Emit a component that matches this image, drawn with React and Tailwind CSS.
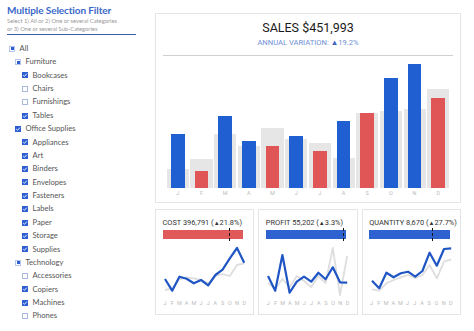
import React from "react";

const items = [
  ["All", 0, "partial"],
  ["Furniture", 1, "partial"],
  ["Bookcases", 2, "on"],
  ["Chairs", 2, "off"],
  ["Furnishings", 2, "off"],
  ["Tables", 2, "on"],
  ["Office Supplies", 1, "on"],
  ["Appliances", 2, "on"],
  ["Art", 2, "on"],
  ["Binders", 2, "on"],
  ["Envelopes", 2, "on"],
  ["Fasteners", 2, "on"],
  ["Labels", 2, "on"],
  ["Paper", 2, "on"],
  ["Storage", 2, "on"],
  ["Supplies", 2, "on"],
  ["Technology", 1, "partial"],
  ["Accessories", 2, "off"],
  ["Copiers", 2, "on"],
  ["Machines", 2, "on"],
  ["Phones", 2, "off"],
];

const indent = ["pl-[9px]", "pl-[15px]", "pl-[22px]"];

function Check({ state }) {
  if (state === "on")
    return (
      <span className="w-[6px] h-[6px] bg-[#2d5fd2] flex items-center justify-center shrink-0">
        <svg viewBox="0 0 6 6" width="6" height="6">
          <path d="M1.2 3.1 L2.5 4.3 L4.9 1.6" stroke="white" strokeWidth="0.9" fill="none" />
        </svg>
      </span>
    );
  if (state === "partial")
    return (
      <span className="w-[6px] h-[6px] border border-[#b7c7ee] bg-white flex items-center justify-center shrink-0">
        <span className="w-[3px] h-[3px] bg-[#2d5fd2]" />
      </span>
    );
  return <span className="w-[6px] h-[6px] border border-[#a9b8de] bg-white shrink-0" />;
}

const months = ["J", "F", "M", "A", "M", "J", "J", "A", "S", "O", "N", "D"];
const grey = [19, 29, 54, 42, 60, 49, 45, 30, 75, 77, 79, 99];
const col = [54, 17, 72, 47, 42, 52, 37, 67, 75, 110, 124, 90];
const isBlue = [1, 0, 1, 1, 0, 1, 0, 1, 0, 1, 1, 0];

const sparks = [
  {
    label: "COST 396,791",
    pct: "21.8%",
    bar: "bg-[#e05a5a]",
    marker: 66,
    blue: [279, 290.7, 276.7, 278.7, 283.3, 280, 285.3, 275, 269.7, 258.3, 248, 262.7],
    grey: [290, 288.3, 279.3, 277.3, 278.3, 280, 283.3, 276, 274, 276, 265, 263.3],
  },
  {
    label: "PROFIT 55,202",
    pct: "3.3%",
    bar: "bg-[#2d62d0]",
    marker: 77.5,
    blue: [276, 290.7, 255, 292.7, 281.7, 276.7, 281.7, 272.7, 279.3, 267.3, 282.3, 282.7],
    grey: [283, 289, 279, 287, 276, 281, 287, 276, 283, 248, 295, 256],
  },
  {
    label: "QUANTITY 8,670",
    pct: "27.7%",
    bar: "bg-[#2d62d0]",
    marker: 62.5,
    blue: [280.7, 288.3, 272.7, 277.3, 273.3, 271.7, 276.7, 271, 252.7, 265.7, 249, 248.3],
    grey: [289.3, 290.7, 283.3, 280, 277.3, 275, 278.3, 275, 265, 278.3, 261.7, 259.3],
  },
];

function pts(arr) {
  return arr.map((y, i) => `${(9 + i * 7.2).toFixed(1)},${(y - 241).toFixed(1)}`).join(" ");
}

function Spark({ s }) {
  return (
    <div className="flex-1 h-[106px] border border-[#e4e4e4] flex flex-col font-['Roboto',sans-serif] overflow-hidden">
      <div className="pl-[6.5px] pr-[4px] mt-[7.5px] h-[10px] leading-[10px] text-[7.4px] text-[#333] whitespace-nowrap overflow-hidden">
        {s.label} (<span className="text-[6px]">▲</span>
        {s.pct})
      </div>
      <div className={`relative ml-[6.5px] mt-[2.5px] w-[80.5px] h-[9px] ${s.bar}`}>
        <div
          className="absolute top-[-2px] h-[13px] w-0 border-l-[1.3px] border-dashed border-[#111]"
          style={{ left: s.marker }}
        />
      </div>
      <svg width="97" height="56" viewBox="0 0 97 56" className="mt-[2px]">
        <polyline points={pts(s.grey)} fill="none" stroke="#dedede" strokeWidth="1.8" strokeLinejoin="round" />
        <polyline points={pts(s.blue)} fill="none" stroke="#1f56c4" strokeWidth="2.2" strokeLinejoin="round" />
      </svg>
      <div className="ml-[5.4px] w-[86.4px] grid grid-cols-12 mt-[2px] text-[5.5px] leading-[8px] text-[#bbb] text-center">
        {months.map((m, i) => (
          <span key={i}>{m}</span>
        ))}
      </div>
    </div>
  );
}

export default function App() {
  return (
    <div className="flex w-[474px] h-[331px] bg-white overflow-hidden">
      <div className="w-[155px] shrink-0 font-['Lato',sans-serif]">
        <div className="pl-[7px] pt-[4px]">
          <div className="h-[12px] leading-[12px] text-[10px] font-bold text-[#3a68c8] tracking-[-0.1px]">
            Multiple Selection Filter
          </div>
          <div className="mt-[1px] text-[5.8px] leading-[8px] text-[#9a9a9a]">
            <div>Select 1) All or 2) One or several Categories</div>
            <div>or 3) One or several Sub-Categories</div>
          </div>
          <div className="mt-[1px] w-[129px] h-px bg-[#3d5ea8]" />
        </div>
        <div className="mt-[7px] flex flex-col">
          {items.map(([t, lvl, st], i) => (
            <div key={i} className={`h-[13.38px] flex items-center gap-[4.5px] ${indent[lvl]}`}>
              <Check state={st} />
              <span className="text-[7.6px] text-[#555] leading-none">{t}</span>
            </div>
          ))}
        </div>
      </div>
      <div className="w-[306px] pt-[13px] flex flex-col gap-[6px]">
        <div className="h-[190px] border border-[#e4e4e4] flex flex-col font-['Roboto',sans-serif]">
          <div className="pt-[5px] h-[23px] leading-[18px] text-[12.5px] text-[#1a1a1a] text-center">
            SALES $451,993
          </div>
          <div className="h-[12px] leading-[12px] text-[7.6px] text-[#6f8fd6] text-center">
            ANNUAL VARIATION: <span className="text-[#3d63c4]">▲</span>19.2%
          </div>
          <div className="mx-[7px] mt-[6px] h-px bg-[#cfcfcf]" />
          <div className="mx-[10px] h-[132px] flex">
            {months.map((m, i) => (
              <div key={i} className="flex-1 relative">
                <div
                  className="absolute bottom-0 left-[0.8px] right-[0.8px] bg-[#e6e6e6]"
                  style={{ height: grey[i] }}
                />
                <div
                  className={`absolute bottom-0 left-[5px] right-[5px] ${isBlue[i] ? "bg-[#1f5fd1]" : "bg-[#e05555]"}`}
                  style={{ height: col[i] }}
                />
              </div>
            ))}
          </div>
          <div className="mx-[10px] h-[11px] flex items-center">
            {months.map((m, i) => (
              <span key={i} className="flex-1 text-center text-[5.5px] text-[#bbb]">
                {m}
              </span>
            ))}
          </div>
        </div>
        <div className="flex gap-[4px]">
          {sparks.map((s, i) => (
            <Spark key={i} s={s} />
          ))}
        </div>
      </div>
    </div>
  );
}
